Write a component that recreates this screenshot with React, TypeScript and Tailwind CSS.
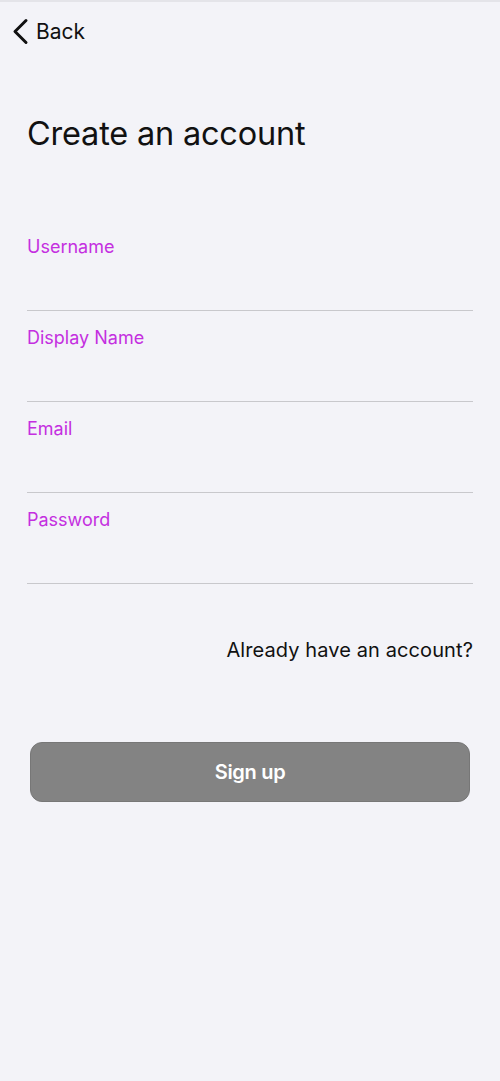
import { useState } from 'react';

const fields = ['Username', 'Display Name', 'Email', 'Password'];

function Field({ label }: { label: string }) {
  const [value, setValue] = useState('');
  return (
    <div className="flex flex-col">
      <label className="text-[18px] leading-[22px] text-[#c42fe0]">{label}</label>
      <input
        value={value}
        onChange={(e) => setValue(e.target.value)}
        type={label === 'Password' ? 'password' : 'text'}
        className="h-[53px] bg-transparent text-[17px] outline-none border-b border-[#c8c8cc]"
      />
    </div>
  );
}

export default function App() {
  return (
    <div
      className="min-h-[1081px] w-[500px] bg-[#f3f3f8] border-t-2 border-[#e4e4e9] text-[#111]"
      style={{ fontFamily: 'Inter, "Liberation Sans", sans-serif' }}
    >
      {/* Nav bar */}
      <div className="flex items-center h-[58px] pl-[12px]">
        <button className="flex items-center gap-[7px]">
          <svg width="17" height="27" viewBox="0 0 17 27" fill="none">
            <path d="M14 2.5L3 13.5L14 24.5" stroke="#111" strokeWidth="3" strokeLinecap="round" strokeLinejoin="round" />
          </svg>
          <span className="text-[21px] leading-none">Back</span>
        </button>
      </div>

      <div className="px-[27px]">
        <h1 className="mt-[54px] text-[32.5px] leading-[40px] tracking-[-0.2px]">Create an account</h1>

        <div className="mt-[82px] flex flex-col gap-[16px]">
          {fields.map((f) => (
            <Field key={f} label={f} />
          ))}
        </div>

        <div className="mt-[53px] flex justify-end">
          <span className="text-[20px] leading-[26px] tracking-[0.1px]">Already have an account?</span>
        </div>

        <div className="mt-[79px] px-[3px]">
          <button className="w-full h-[60px] rounded-[12px] bg-[#838383] border border-[#777] text-white text-[20px] font-semibold tracking-[-0.3px]">
            Sign up
          </button>
        </div>
      </div>
    </div>
  );
}
